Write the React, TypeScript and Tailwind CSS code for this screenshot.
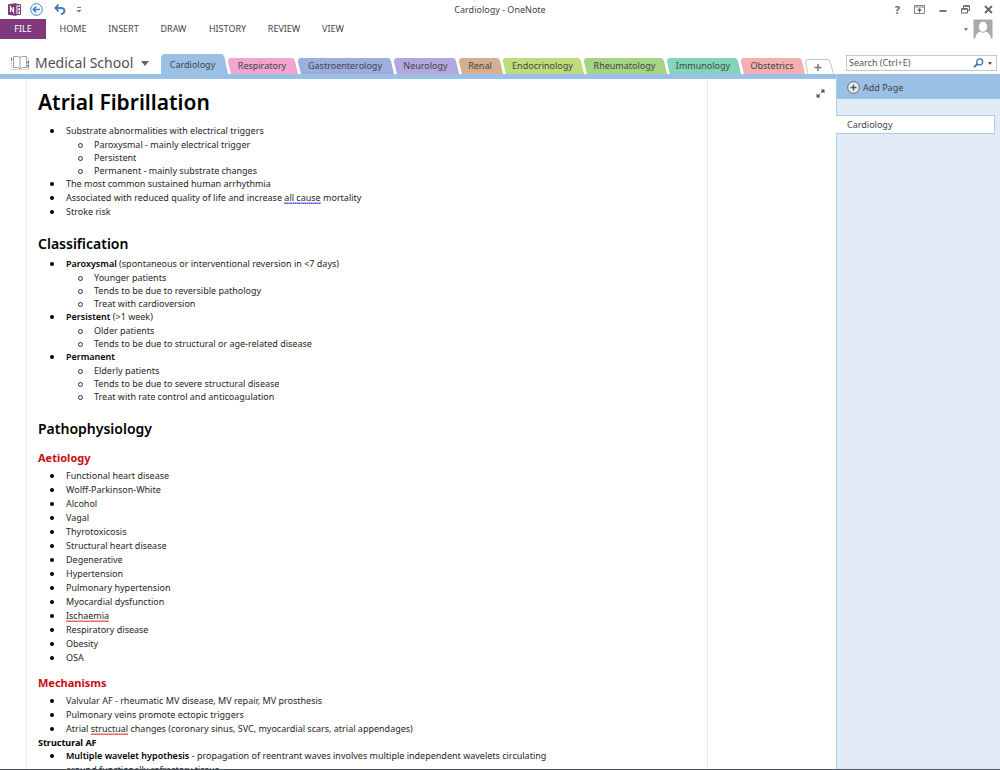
import React from 'react';

type Item = { text: React.ReactNode; children?: string[] };

const sections = [
  { label: 'Respiratory', width: 'w-[70px]', color: 'text-[#f1a5d0]' },
  { label: 'Gastroenterology', width: 'w-[96px]', color: 'text-[#9caee0]' },
  { label: 'Neurology', width: 'w-[65px]', color: 'text-[#b3a8de]' },
  { label: 'Renal', width: 'w-[44px]', color: 'text-[#d5af90]' },
  { label: 'Endocrinology', width: 'w-[81px]', color: 'text-[#bfdc7c]' },
  { label: 'Rheumatology', width: 'w-[83px]', color: 'text-[#a5d584]' },
  { label: 'Immunology', width: 'w-[74px]', color: 'text-[#82d5bb]' },
  { label: 'Obstetrics', width: 'w-[64px]', color: 'text-[#f4afb1]' },
];

const menus = [
  { label: 'HOME', width: 'w-[54px]' },
  { label: 'INSERT', width: 'w-[47px]' },
  { label: 'DRAW', width: 'w-[53px]' },
  { label: 'HISTORY', width: 'w-[55px]' },
  { label: 'REVIEW', width: 'w-[58px]' },
  { label: 'VIEW', width: 'w-[40px]' },
];

const overview: Item[] = [
  {
    text: 'Substrate abnormalities with electrical triggers',
    children: ['Paroxysmal - mainly electrical trigger', 'Persistent', 'Permanent - mainly substrate changes'],
  },
  { text: 'The most common sustained human arrhythmia' },
  {
    text: (
      <>
        Associated with reduced quality of life and increase <Squiggle tone="blue">all cause</Squiggle> mortality
      </>
    ),
  },
  { text: 'Stroke risk' },
];

const classification: Item[] = [
  {
    text: (
      <>
        <B>Paroxysmal</B> (spontaneous or interventional reversion in &lt;7 days)
      </>
    ),
    children: ['Younger patients', 'Tends to be due to reversible pathology', 'Treat with cardioversion'],
  },
  {
    text: (
      <>
        <B>Persistent</B> (&gt;1 week)
      </>
    ),
    children: ['Older patients', 'Tends to be due to structural or age-related disease'],
  },
  {
    text: <B>Permanent</B>,
    children: [
      'Elderly patients',
      'Tends to be due to severe structural disease',
      'Treat with rate control and anticoagulation',
    ],
  },
];

const aetiology: Item[] = [
  { text: 'Functional heart disease' },
  { text: 'Wolff-Parkinson-White' },
  { text: 'Alcohol' },
  { text: 'Vagal' },
  { text: 'Thyrotoxicosis' },
  { text: 'Structural heart disease' },
  { text: 'Degenerative' },
  { text: 'Hypertension' },
  { text: 'Pulmonary hypertension' },
  { text: 'Myocardial dysfunction' },
  { text: <Squiggle tone="red">Ischaemia</Squiggle> },
  { text: 'Respiratory disease' },
  { text: 'Obesity' },
  { text: 'OSA' },
];

const mechanisms: Item[] = [
  { text: 'Valvular AF - rheumatic MV disease, MV repair, MV prosthesis' },
  { text: 'Pulmonary veins promote ectopic triggers' },
  {
    text: (
      <>
        Atrial <Squiggle tone="red">structual</Squiggle> changes (coronary sinus, SVC, myocardial scars, atrial
        appendages)
      </>
    ),
  },
];

const structural: Item[] = [
  {
    text: (
      <>
        <B>Multiple wavelet hypothesis</B> - propagation of reentrant waves involves multiple independent wavelets
        circulating around functionally refractory tissue
      </>
    ),
  },
];

function B({ children }: { children: React.ReactNode }) {
  return <strong className="font-semibold text-black">{children}</strong>;
}

function Squiggle({ tone, children }: { tone: 'red' | 'blue'; children: React.ReactNode }) {
  return (
    <span
      className={
        tone === 'red'
          ? 'bg-[linear-gradient(45deg,#e52020_25%,#f7b0b0_25%_75%,#e52020_75%)] bg-[length:2px_2px] bg-bottom bg-repeat-x'
          : 'bg-[linear-gradient(45deg,#3030e8_25%,#b4b4f7_25%_75%,#3030e8_75%)] bg-[length:2px_2px] bg-bottom bg-repeat-x'
      }
    >
      {children}
    </span>
  );
}

function Notes({ items }: { items: Item[] }) {
  return (
    <ul className="pl-3">
      {items.map((item, i) => (
        <li key={i} className="flex items-start leading-[14px]">
          <span className="flex h-[14px] w-4 shrink-0 items-center">
            <span className="size-1 rounded-full bg-black" />
          </span>
          <div>
            <p>{item.text}</p>
            {item.children && (
              <ul className="pl-3 leading-[13px]">
                {item.children.map((child) => (
                  <li key={child} className="flex items-center">
                    <span className="flex w-4 shrink-0 items-center pt-px">
                      <span className="size-[5px] rounded-full border border-[#333]" />
                    </span>
                    {child}
                  </li>
                ))}
              </ul>
            )}
          </div>
        </li>
      ))}
    </ul>
  );
}

function Caret({ className }: { className: string }) {
  return (
    <svg viewBox="0 0 8 5" className={className} aria-hidden="true">
      <path d="M0 0H8L4 5Z" fill="currentColor" />
    </svg>
  );
}

function SectionTab({ label, width, color }: { label: string; width: string; color: string }) {
  return (
    <button role="tab" aria-selected="false" className={`flex h-4 shrink-0 ${width} ${color}`}>
      <svg viewBox="0 0 5 16" className="h-4 w-[5px] shrink-0" aria-hidden="true">
        <path d="M5 0H3Q0 0 0 3Q0 5 1 8L3 16H5Z" fill="currentColor" />
      </svg>
      <span className="h-4 flex-1 bg-current whitespace-nowrap">
        <span className="flex h-full items-center justify-center text-[#444]">{label}</span>
      </span>
      <svg viewBox="0 0 7 16" className="h-4 w-[7px] shrink-0" aria-hidden="true">
        <path d="M0 0H1Q3 0 4 3L7 16H0Z" fill="currentColor" />
      </svg>
    </button>
  );
}

export default function App() {
  return (
    <div className="flex h-screen flex-col overflow-hidden border-b border-[#4a5560] bg-white font-['Noto_Sans',sans-serif] text-[9px] text-[#444]">
      <header className="shrink-0">
        <div className="grid h-[19px] grid-cols-[1fr_auto_1fr] items-center">
          <div className="flex items-center pl-2">
            <svg viewBox="0 0 13 13" className="size-[13px]" aria-label="OneNote" role="img">
              <path d="M7 1.5H12.5V11.5H7Z" fill="#fff" stroke="#80397b" />
              <path d="M10 1.5V11.5M10 4.5H12.5M10 8H12.5" stroke="#80397b" />
              <path d="M0 1.2L8.500 0V13L0 11.8Z" fill="#80397b" />
              <path d="M2.5 9V4L5.5 9V4" fill="none" stroke="#fff" strokeWidth="1.2" />
            </svg>
            <button aria-label="Back" className="ml-[9px]">
              <svg viewBox="0 0 13 13" className="size-[13px]" fill="none" stroke="#3d7ebb">
                <circle cx="6.5" cy="6.5" r="5.8" strokeWidth="1" />
                <path d="M10 6.5H3.5M6.3 3.5L3.3 6.5L6.3 9.5" strokeWidth="1.6" />
              </svg>
            </button>
            <button aria-label="Undo" className="ml-[11px]">
              <svg viewBox="0 0 12 11" className="h-[11px] w-3" fill="none" stroke="#3d7ebb" strokeWidth="1.8">
                <path d="M4.5 0.7L1.3 4L4.5 7.3M1.5 4H7Q10.5 4 10.5 7Q10.5 9.5 7 10" />
              </svg>
            </button>
            <button aria-label="Customize toolbar" className="ml-2.5">
              <svg viewBox="0 0 6 6" className="size-1.5">
                <path d="M1 0.5H5" stroke="#777" />
                <path d="M0.5 3H5.5L3 5.5Z" fill="#777" />
              </svg>
            </button>
          </div>
          <h1 className="leading-[19px]">Cardiology - OneNote</h1>
          <div className="flex items-center justify-end gap-[14px] pr-[7px] text-[#666]">
            <button aria-label="Help" className="text-[11px] leading-[14px] font-bold">
              ?
            </button>
            <button aria-label="Ribbon display options">
              <svg viewBox="0 0 11 9" className="h-[9px] w-[11px]" fill="none" stroke="currentColor">
                <path d="M0.5 0.5H10.5V8.5H0.5ZM0.5 2H10.5" strokeWidth="0.8" />
                <path d="M5.5 7.5V4M3.7 5.7L5.5 3.9L7.3 5.7" strokeWidth="1.2" />
              </svg>
            </button>
            <button aria-label="Minimize">
              <svg viewBox="0 0 8 9" className="h-[9px] w-2">
                <path d="M0.5 6H7.5" stroke="currentColor" strokeWidth="1.8" />
              </svg>
            </button>
            <button aria-label="Restore">
              <svg viewBox="0 0 9 9" className="size-[9px]" fill="none" stroke="currentColor">
                <path d="M2.5 3V1H8.5V5.5H7" />
                <path d="M0.5 3.7H6.5V8H0.5Z" />
                <path d="M2.5 1H8.5M0.5 4H6.5" strokeWidth="1.6" />
              </svg>
            </button>
            <button aria-label="Close">
              <svg viewBox="0 0 9 9" className="size-[9px]">
                <path d="M1 1L8 8M8 1L1 8" stroke="currentColor" strokeWidth="1.8" />
              </svg>
            </button>
          </div>
        </div>

        <div className="flex h-5 items-stretch">
          <nav className="flex">
            <button className="w-[46px] bg-[#80397b] text-white">FILE</button>
            {menus.map((m) => (
              <button key={m.label} className={m.width}>
                {m.label}
              </button>
            ))}
          </nav>
          <button aria-label="Account" className="ml-auto flex items-center gap-[5px] pr-[7px] text-[#666]">
            <Caret className="h-[3px] w-1" />
            <svg viewBox="0 0 20 20" className="size-5">
              <path d="M0.500 0.500H19.500V19.500H0.500Z" fill="#a9a9a9" />
              <path d="M2 20Q2.5 14 7.5 12.5H12.5Q17.5 14 18 20Z" fill="#fff" />
              <ellipse cx="10" cy="7.7" rx="4.6" ry="5.6" fill="#fff" stroke="#a9a9a9" />
            </svg>
          </button>
        </div>

        <div className="flex h-[35px] items-end">
          <button className="flex w-[161px] shrink-0 items-center self-end pb-[2px] pl-[11px]">
            <svg viewBox="0 0 18 15" className="h-[15px] w-[18px] shrink-0" fill="none">
              <path
                d="M9 1.500Q8 0.500 6.500 0.500H2.500V11.500H6.500Q8 11.500 9 13Q10 11.500 11.500 11.500H15.500V0.500H11.500Q10 0.500 9 1.500ZM9 1.500V13"
                stroke="#a0a0a0"
              />
              <path d="M0.500 5V13.500H17.500V2" stroke="#b4b4b4" strokeDasharray="1 1" />
              <path d="M0.500 1.500V4.500" stroke="#d0402b" />
              <path d="M17.200 5V7.500M17.200 9V11.500" stroke="#2e75b6" strokeWidth="1.500" />
            </svg>
            <span className="ml-1.5 text-[14px] leading-[18px] whitespace-nowrap text-[#505050]">Medical School</span>
            <Caret className="ml-2 h-[5px] w-2 shrink-0 text-[#666]" />
          </button>

          <div className="flex min-w-0 items-end" role="tablist">
            <button role="tab" aria-selected="true" className="flex h-5 w-[67px] shrink-0 text-[#9bc0e6]">
              <span className="flex h-5 flex-1 items-center justify-center rounded-tl-[4px] bg-[#9bc0e6] pt-0.5 pl-1 text-[#444]">
                Cardiology
              </span>
              <svg viewBox="0 0 8 20" className="h-5 w-2 shrink-0" aria-hidden="true">
                <path d="M0 0H1Q4 0 4.7 4L8 20H0Z" fill="currentColor" />
              </svg>
            </button>
            {sections.map((s) => (
              <SectionTab key={s.label} {...s} />
            ))}
            <button aria-label="New section" className="shrink-0">
              <svg viewBox="0 0 29 15" className="h-[15px] w-[29px]" fill="none">
                <path d="M3 15L0.8 5Q0 0.5 3 0.5H22Q24.5 0.5 25.2 3L28.5 15" stroke="#c6c6c6" />
                <path d="M13 5V12M9.500 8.500H16.500" stroke="#777" strokeWidth="1.500" />
              </svg>
            </button>
          </div>

          <div className="mr-[3px] mb-[3px] ml-auto flex h-4 w-[151px] shrink-0 items-center border border-[#c6c6c6] bg-white pr-1">
            <input
              type="text"
              aria-label="Search"
              placeholder="Search (Ctrl+E)"
              className="min-w-0 flex-1 pl-0.5 outline-none placeholder:text-[#555]"
            />
            <button aria-label="Search notes">
              <svg viewBox="0 0 11 10" className="h-2.5 w-[11px]" fill="none" stroke="#2e75b6">
                <circle cx="6.700" cy="3.800" r="3" strokeWidth="1.300" />
                <path d="M4.500 6L1 9.200" strokeWidth="1.800" />
              </svg>
            </button>
            <button aria-label="Search scope" className="ml-1 text-[#333]">
              <Caret className="h-[3px] w-1" />
            </button>
          </div>
        </div>
      </header>

      <div className="flex min-h-0 flex-1">
        <main className="flex min-w-0 flex-1 items-stretch justify-between overflow-hidden border-t-[5px] border-[#9bc0e6]">
          <article className="ml-[26px] w-[682px] border-x border-[#e9e9e9] pt-2 pl-[11px] text-[#262626]">
            <h2 className="text-[21px] leading-[30px] font-semibold text-black">Atrial Fibrillation</h2>
            <div className="max-w-[530px] pt-[7px]">
              <Notes items={overview} />
              <h3 className="mt-[15px] mb-[3px] text-[14px] leading-5 font-semibold text-black">Classification</h3>
              <Notes items={classification} />
              <h3 className="mt-4 text-[14px] leading-5 font-semibold text-black">Pathophysiology</h3>
              <h4 className="mt-[11px] mb-[3px] text-[11px] leading-4 font-bold text-[#c90c0f]">Aetiology</h4>
              <Notes items={aetiology} />
              <h4 className="mt-[10px] mb-[3px] text-[11px] leading-4 font-bold text-[#c90c0f]">Mechanisms</h4>
              <Notes items={mechanisms} />
              <p className="leading-[13px] font-bold text-black">Structural AF</p>
              <Notes items={structural} />
            </div>
          </article>
          <button aria-label="Full page view" className="mt-2.5 mr-[11px] self-start">
            <svg viewBox="0 0 9 9" className="size-[9px]">
              <path d="M4.500 0.500H8.500V4.500ZM0.500 4.500V8.500H4.500Z" fill="#555" />
              <path d="M7.500 1.500L5.200 3.800M3.800 5.200L1.500 7.500" stroke="#555" strokeWidth="1.300" />
            </svg>
          </button>
        </main>

        <aside className="w-[164px] shrink-0 border-l border-[#a9cfef] bg-[#e1ebf5]">
          <button className="flex h-[25px] w-full items-center gap-[3px] bg-[#9bc0e6] pt-0.5 pl-2.5">
            <svg viewBox="0 0 13 13" className="size-[13px]">
              <circle cx="6.500" cy="6.500" r="5.800" fill="#e6eff9" stroke="#666" />
              <path d="M6.500 3.500V9.500M3.500 6.500H9.500" stroke="#555" strokeWidth="1.400" />
            </svg>
            Add Page
          </button>
          <nav className="mt-4 -ml-px pr-[5px]">
            <a
              href="#cardiology"
              className="flex h-[19px] items-center border-y border-r border-[#a9cfef] bg-white pl-[11px]"
            >
              Cardiology
            </a>
          </nav>
        </aside>
      </div>
    </div>
  );
}
